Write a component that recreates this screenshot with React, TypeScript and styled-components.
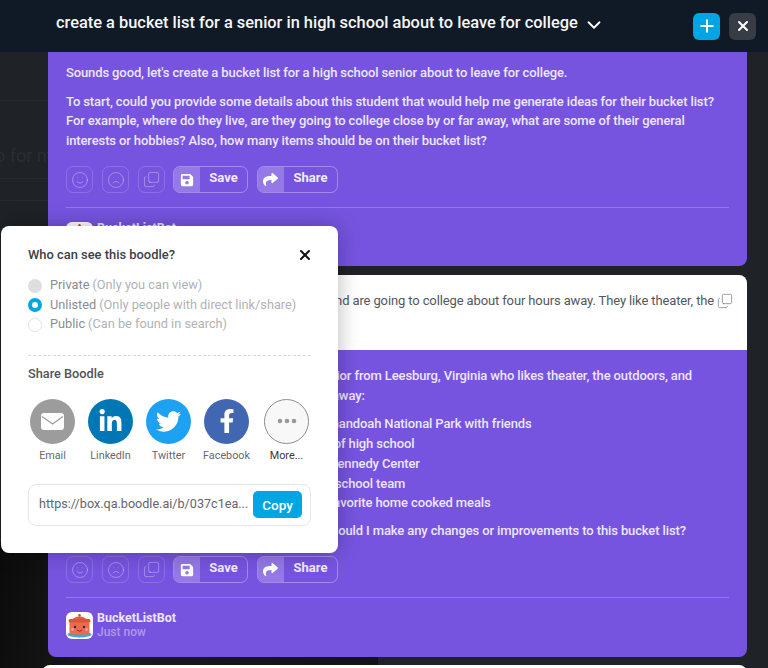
import React from "react";
import styled, { createGlobalStyle } from "styled-components";
import { ChevronDown, Plus, X, Smile, Frown, Copy } from "lucide-react";
import { FaSave, FaShare, FaTwitter, FaFacebookF, FaLinkedinIn } from "react-icons/fa";

const Global = createGlobalStyle`
  html, body { margin: 0; padding: 0; background: #1f2226; }
  * { box-sizing: border-box; }
  body { font-family: "Roboto", "Liberation Sans", sans-serif; }
`;

const Page = styled.div`
  position: relative;
  width: 768px;
  height: 668px;
  overflow: hidden;
  background: #1f2226;
  display: flex;
  flex-direction: column;
`;
const Backdrop = styled.div`
  position: absolute;
  inset: 52px 0 0 0;
  overflow: hidden;
`;
const GhostText = styled.div`
  position: absolute;
  left: -5px;
  top: 93px;
  font-size: 18px;
  color: #2b2e31;
  white-space: nowrap;
`;
const GhostLine = styled.div<{ $top: number }>`
  position: absolute;
  left: 0;
  width: 48px;
  top: ${(p) => p.$top}px;
  height: 1px;
  background: #27292d;
`;
const DarkPhoto = styled.div`
  position: absolute;
  left: 0;
  top: 490px;
  width: 378px;
  height: 130px;
  background: linear-gradient(100deg, #0b0b0b 0%, #1a1a1a 30%, #141414 100%);
`;
const Header = styled.header`
  position: relative;
  height: 52px;
  flex: none;
  background: #0f1a26;
  display: flex;
  align-items: center;
  padding: 0 12px 6px 56px;
  color: #fff;
`;
const Title = styled.h1`
  margin: 0;
  font-size: 16.4px;
  line-height: 22px;
  font-weight: 500;
  white-space: nowrap;
  color: #f6f7f8;
`;
const TitleChevron = styled(ChevronDown)`
  margin: 4px 0 0 5px;
  flex: none;
`;
const HeaderActions = styled.div`
  margin-left: auto;
  display: flex;
  gap: 9px;
  padding-top: 6px;
`;
const HeaderButton = styled.button<{ $primary?: boolean }>`
  width: 27px;
  height: 27px;
  padding: 0;
  border: 0;
  border-radius: 6px;
  background: ${(p) => (p.$primary ? "#00a5e3" : "#383d45")};
  color: #fff;
  display: flex;
  align-items: center;
  justify-content: center;
`;
const Column = styled.main`
  position: relative;
  width: 699px;
  margin-left: 48px;
  display: flex;
  flex-direction: column;
`;
const BotCard = styled.section<{ $first?: boolean }>`
  background: #7654e0;
  color: #ece7fb;
  padding: ${(p) => (p.$first ? "11px" : "16px")} 18px 0;
  height: ${(p) => (p.$first ? "214px" : "307px")};
  border-radius: 0 0 8px 8px;
  flex: none;
  letter-spacing: -0.12px;
`;
const Para = styled.p`
  margin: 0 0 9px;
  font-size: 13px;
  line-height: 19.6px;
  font-weight: 500;
  white-space: nowrap;
`;
const List = styled.ul`
  margin: 0 0 8px;
  padding: 0 0 0 18px;
  list-style: disc;
  font-size: 13px;
  line-height: 19.8px;
  font-weight: 500;
  white-space: nowrap;
`;
const Actions = styled.div<{ $top: number }>`
  display: flex;
  align-items: flex-start;
  gap: 9px;
  margin-top: ${(p) => p.$top}px;
  letter-spacing: 0;
`;
const IconButton = styled.button`
  width: 27px;
  height: 27px;
  padding: 0;
  background: transparent;
  border: 1px solid rgba(255, 255, 255, 0.16);
  border-radius: 7px;
  color: rgba(255, 255, 255, 0.36);
  display: flex;
  align-items: center;
  justify-content: center;
`;
const LabelButton = styled.button<{ $tucked?: boolean }>`
  height: 27px;
  padding: 0;
  margin-left: ${(p) => (p.$tucked ? "-1px" : "0")};
  background: transparent;
  border: 1px solid rgba(255, 255, 255, 0.32);
  border-radius: 7px;
  color: #f1edff;
  display: flex;
  align-items: stretch;
  overflow: hidden;
  font-family: inherit;
  font-size: 13px;
  font-weight: 700;
`;
const LabelIcon = styled.span`
  width: 27px;
  flex: none;
  background: rgba(255, 255, 255, 0.22);
  display: flex;
  align-items: center;
  justify-content: center;
  margin: -1px 0 -1px -1px;
  color: #fff;
`;
const LabelText = styled.span<{ $width: number }>`
  width: ${(p) => p.$width}px;
  text-align: center;
  line-height: 22px;
`;
const Divider = styled.hr`
  margin: 14px 0 0;
  border: 0;
  height: 1px;
  background: rgba(255, 255, 255, 0.22);
`;
const Author = styled.div`
  display: flex;
  gap: 4px;
  margin-top: 14px;
`;
const Avatar = styled.div`
  width: 27px;
  height: 27px;
  border-radius: 6px;
  background: #fff;
  flex: none;
  overflow: hidden;
`;
const AuthorText = styled.div`
  display: flex;
  flex-direction: column;
  margin-top: -2px;
`;
const AuthorName = styled.span`
  font-size: 12.5px;
  line-height: 15px;
  font-weight: 700;
  letter-spacing: 0;
  color: #ece7fb;
`;
const AuthorTime = styled.span`
  font-size: 12px;
  line-height: 14px;
  font-weight: 500;
  letter-spacing: 0;
  color: #ae98ee;
`;
const UserBubble = styled.section`
  position: relative;
  margin-top: 9px;
  height: 75px;
  flex: none;
  background: #fff;
  border-radius: 8px 8px 0 0;
  padding: 16px 33px 0 18px;
  font-size: 13px;
  line-height: 19.6px;
  letter-spacing: -0.125px;
  color: #53575c;
  white-space: nowrap;
  overflow: hidden;
`;
const BubbleCopy = styled(Copy)`
  position: absolute;
  right: 14px;
  top: 18px;
  color: #8c8f94;
  transform: scaleY(-1);
`;
const NextBubble = styled.div`
  margin-top: 8px;
  height: 20px;
  margin-left: -6px;
  background: #fff;
  border-radius: 8px 8px 0 0;
  flex: none;
`;
const Modal = styled.aside`
  position: absolute;
  left: 1px;
  top: 226px;
  width: 337px;
  height: 327px;
  background: #fff;
  border-radius: 8px;
  box-shadow: 0 0 22px rgba(0, 0, 0, 0.28);
  padding: 19px 27px 0;
  color: #3d4147;
`;
const ModalHead = styled.div`
  display: flex;
  align-items: center;
  justify-content: space-between;
  height: 19px;
`;
const ModalTitle = styled.h2`
  margin: 0;
  font-size: 12.9px;
  font-weight: 500;
  color: #3d4147;
`;
const ModalClose = styled(X)`
  color: #111;
  margin-right: -2px;
`;
const Radios = styled.div`
  margin-top: 11px;
  display: flex;
  flex-direction: column;
`;
const RadioRow = styled.label`
  height: 19.6px;
  display: flex;
  align-items: center;
  gap: 8px;
  font-size: 12.75px;
  color: #8a8d91;
  white-space: nowrap;
`;
const RadioDot = styled.span<{ $state: "disabled" | "on" | "off" }>`
  width: 14px;
  height: 14px;
  flex: none;
  border-radius: 50%;
  margin-top: 2px;
  background: ${(p) => (p.$state === "disabled" ? "#dedede" : "#fff")};
  border: ${(p) =>
    p.$state === "on"
      ? "4px solid #00a5e3"
      : p.$state === "off"
      ? "1px solid #e2e2e2"
      : "0"};
`;
const RadioHint = styled.span`
  color: #b0b2b5;
  margin-left: -5px;
`;
const Dashed = styled.hr`
  margin: 21px 0 0;
  border: 0;
  border-top: 1px dashed #dcdcdc;
`;
const SectionTitle = styled.h3`
  margin: 9px 0 0;
  font-size: 12.75px;
  line-height: 17px;
  font-weight: 500;
  color: #50545a;
`;
const ShareRow = styled.div`
  display: flex;
  gap: 13px;
  margin-top: 17px;
  padding-left: 2px;
`;
const ShareItem = styled.div<{ $last?: boolean }>`
  width: 45px;
  margin-left: ${(p) => (p.$last ? "2px" : "0")};
  display: flex;
  flex-direction: column;
  align-items: center;
  gap: 5px;
`;
const ShareCircle = styled.div<{ $bg: string; $outlined?: boolean }>`
  width: 45px;
  height: 45px;
  border-radius: 50%;
  background: ${(p) => p.$bg};
  border: ${(p) => (p.$outlined ? "1px solid #8e8e8e" : "0")};
  color: #fff;
  display: flex;
  align-items: center;
  justify-content: center;
`;
const ShareLabel = styled.span<{ $dark?: boolean }>`
  font-size: 10.8px;
  line-height: 14px;
  white-space: nowrap;
  color: ${(p) => (p.$dark ? "#3a3a3a" : "#66696d")};
`;
const LinkBox = styled.div`
  margin-top: 21px;
  height: 42px;
  border: 1px solid #e6e6e6;
  border-radius: 8px;
  display: flex;
  align-items: center;
  padding: 0 8px 0 10px;
  gap: 6px;
`;
const LinkText = styled.span`
  flex: 1;
  min-width: 0;
  padding-bottom: 3px;
  font-size: 12.6px;
  color: #62666a;
  white-space: nowrap;
`;
const CopyButton = styled.button`
  width: 49px;
  height: 27px;
  flex: none;
  padding: 0;
  border: 0;
  border-radius: 5px;
  background: #00a5e3;
  color: #fff;
  font-family: inherit;
  font-size: 13.5px;
  font-weight: 500;
`;
const FlippedCopy = styled(Copy)`
  transform: scaleY(-1);
`;

const PotAvatar = () => (
  <svg width="27" height="27" viewBox="0 0 27 27">
    <ellipse cx="13.5" cy="22.5" rx="12" ry="3" fill="#3fa6d6" />
    <rect x="3.5" y="8" width="20" height="14.5" rx="3" fill="#ee6a4d" />
    <rect x="2.5" y="7" width="22" height="3.5" rx="1.7" fill="#d9563b" />
    <path d="M6.5 7 Q13.5 1.5 20.5 7Z" fill="#e0603f" />
    <circle cx="13.5" cy="3.2" r="1.2" fill="#c9482f" />
    <circle cx="9" cy="15" r="1.2" fill="#23323f" />
    <circle cx="18" cy="15" r="1.2" fill="#23323f" />
    <circle cx="6.5" cy="17.5" r="1.4" fill="#f59aa0" />
    <circle cx="20.5" cy="17.5" r="1.4" fill="#f59aa0" />
    <path d="M11 18 Q13.5 20.5 16 18" stroke="#7c2a1c" strokeWidth="0.9" fill="none" />
  </svg>
);

const EnvelopeIcon = () => (
  <svg width="23" height="17" viewBox="0 0 23 17">
    <rect width="23" height="17" rx="3" fill="#fff" />
    <path d="M1 3.5 L11.5 11 L22 3.5" fill="none" stroke="#9c9c9c" strokeWidth="1.3" />
  </svg>
);

const ActionRow = ({ top }: { top: number }) => (
  <Actions $top={top}>
    <IconButton aria-label="Like"><Smile size={18} strokeWidth={1.2} /></IconButton>
    <IconButton aria-label="Dislike"><Frown size={18} strokeWidth={1.2} /></IconButton>
    <IconButton aria-label="Copy"><FlippedCopy size={17} strokeWidth={1.3} /></IconButton>
    <LabelButton $tucked>
      <LabelIcon><FaSave size={14} /></LabelIcon>
      <LabelText $width={47}>Save</LabelText>
    </LabelButton>
    <LabelButton>
      <LabelIcon><FaShare size={15} /></LabelIcon>
      <LabelText $width={53}>Share</LabelText>
    </LabelButton>
  </Actions>
);

const AuthorBlock = () => (
  <Author>
    <Avatar><PotAvatar /></Avatar>
    <AuthorText>
      <AuthorName>BucketListBot</AuthorName>
      <AuthorTime>Just now</AuthorTime>
    </AuthorText>
  </Author>
);

export default function App() {
  return (
    <Page>
      <Global />
      <Backdrop>
        <GhostText>o for more</GhostText>
        <GhostLine $top={48} />
        <GhostLine $top={126} />
        <GhostLine $top={148} />
        <DarkPhoto />
      </Backdrop>
      <Header>
        <Title>create a bucket list for a senior in high school about to leave for college</Title>
        <TitleChevron size={22} strokeWidth={2} />
        <HeaderActions>
          <HeaderButton $primary aria-label="New"><Plus size={20} strokeWidth={2.4} /></HeaderButton>
          <HeaderButton aria-label="Close"><X size={16} strokeWidth={3} /></HeaderButton>
        </HeaderActions>
      </Header>
      <Column>
        <BotCard $first>
          <Para>Sounds good, let's create a bucket list for a high school senior about to leave for college.</Para>
          <Para>
            To start, could you provide some details about this student that would help me generate ideas for their bucket list?<br />
            For example, where do they live, are they going to college close by or far away, what are some of their general<br />
            interests or hobbies? Also, how many items should be on their bucket list?
          </Para>
          <ActionRow top={16} />
          <Divider />
          <AuthorBlock />
        </BotCard>
        <UserBubble>
          The student's family lives in Leesburg, Virginia and are going to college about four hours away. They like theater, the<br />
          outdoors, and spending time with friends.
          <BubbleCopy size={16} strokeWidth={1.3} />
        </UserBubble>
        <BotCard>
          <Para>
            Here is my first bucket list for a high school senior from Leesburg, Virginia who likes theater, the outdoors, and<br />
            and who is going to a college about four hours away:
          </Para>
          <List>
            <li>Go on a weekend hiking trip together to Shenandoah National Park with friends</li>
            <li>Attend prom and graduation at the very end of high school</li>
            <li>See a Broadway-style show together at the Kennedy Center</li>
            <li>Try out one last time for a varsity sport high school team</li>
            <li>Learn how to cook a dozen of your family's favorite home cooked meals</li>
          </List>
          <Para>How does this initial list look to you thus far? Should I make any changes or improvements to this bucket list?</Para>
          <ActionRow top={15.6} />
          <Divider />
          <AuthorBlock />
        </BotCard>
        <NextBubble />
      </Column>
      <Modal>
        <ModalHead>
          <ModalTitle>Who can see this boodle?</ModalTitle>
          <ModalClose size={16} strokeWidth={3} />
        </ModalHead>
        <Radios>
          <RadioRow><RadioDot $state="disabled" />Private <RadioHint>(Only you can view)</RadioHint></RadioRow>
          <RadioRow><RadioDot $state="on" />Unlisted <RadioHint>(Only people with direct link/share)</RadioHint></RadioRow>
          <RadioRow><RadioDot $state="off" />Public <RadioHint>(Can be found in search)</RadioHint></RadioRow>
        </Radios>
        <Dashed />
        <SectionTitle>Share Boodle</SectionTitle>
        <ShareRow>
          <ShareItem>
            <ShareCircle $bg="#9c9c9c"><EnvelopeIcon /></ShareCircle>
            <ShareLabel>Email</ShareLabel>
          </ShareItem>
          <ShareItem>
            <ShareCircle $bg="#0077b5"><FaLinkedinIn size={25} /></ShareCircle>
            <ShareLabel>LinkedIn</ShareLabel>
          </ShareItem>
          <ShareItem>
            <ShareCircle $bg="#1da1f2"><FaTwitter size={25} /></ShareCircle>
            <ShareLabel>Twitter</ShareLabel>
          </ShareItem>
          <ShareItem>
            <ShareCircle $bg="#4267b2"><FaFacebookF size={24} /></ShareCircle>
            <ShareLabel>Facebook</ShareLabel>
          </ShareItem>
          <ShareItem $last>
            <ShareCircle $bg="#f8f8f8" $outlined>
              <svg width="22" height="6" viewBox="0 0 22 6"><circle cx="4" cy="3" r="2.3" fill="#999" /><circle cx="11" cy="3" r="2.3" fill="#999" /><circle cx="18" cy="3" r="2.3" fill="#999" /></svg>
            </ShareCircle>
            <ShareLabel $dark>More...</ShareLabel>
          </ShareItem>
        </ShareRow>
        <LinkBox>
          <LinkText>https://box.qa.boodle.ai/b/037c1ea...</LinkText>
          <CopyButton>Copy</CopyButton>
        </LinkBox>
      </Modal>
    </Page>
  );
}
